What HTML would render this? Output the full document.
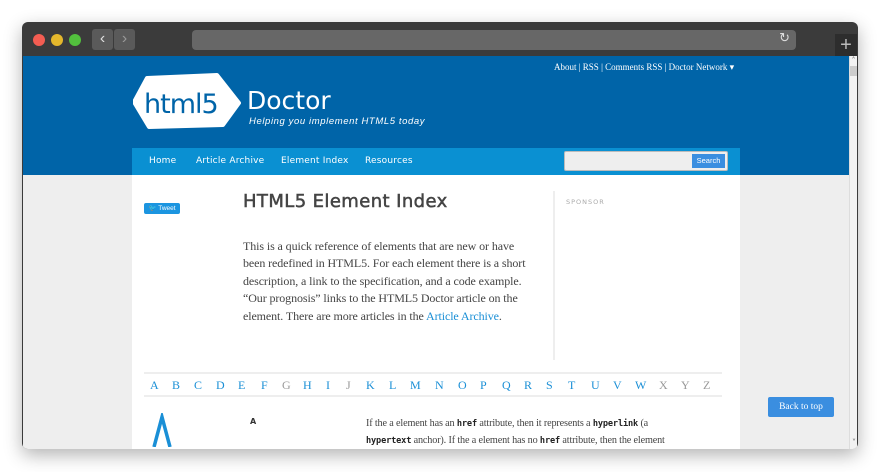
<!DOCTYPE html>
<html><head><meta charset="utf-8"><style>
*{margin:0;padding:0;box-sizing:border-box}
body{width:880px;height:472px;background:#fff;position:relative;overflow:hidden;font-family:"Liberation Serif",serif}
.win{position:absolute;left:22px;top:22px;width:836px;height:427px;border-radius:6px;background:#3b3b3b;box-shadow:0 6px 18px rgba(0,0,0,.3);overflow:hidden}
.dot{position:absolute;top:12px;width:12px;height:12px;border-radius:50%}
.nb{position:absolute;top:7px;width:21px;height:21px;background:#5a5a5a;border-radius:3px;color:#ddd;font:16px "Liberation Sans";text-align:center;line-height:20px}
.url{position:absolute;left:170px;top:8px;width:604px;height:20px;background:#676767;border-radius:4px}
.plus{position:absolute;left:813px;top:12px;width:22px;height:22px;background:#2d2d2d;color:#bbb;font:20px "Liberation Sans";text-align:center;line-height:22px}
.view{position:absolute;left:1px;top:34px;width:834px;height:393px;background:#eee;overflow:hidden}
.hdr{position:absolute;left:0;top:0;width:826px;height:119px;background:#0064a8}
.sb{position:absolute;left:826px;top:0;width:8px;height:393px;background:#f2f2f2;border-left:1px solid #ddd}
.top{position:absolute;left:531px;top:6px;color:#fff;font-size:9px}
.nav{position:absolute;left:109px;top:92px;width:608px;height:27px;background:#0a90d2}
.nav span{position:absolute;top:8px;color:#fff;font:9px "DejaVu Sans";letter-spacing:.2px}
.srch{position:absolute;left:432px;top:3px;width:164px;height:20px;background:#eee;border:1px solid #bbb;border-radius:2px}
.sbtn{position:absolute;right:2px;top:2px;width:33px;height:14px;background:#3a8ee0;color:#fff;font:7.5px "Liberation Sans";text-align:center;line-height:14px}
.main{position:absolute;left:109px;top:119px;width:608px;height:280px;background:#fff}
.letters{position:absolute;left:12px;top:197px;width:578px;height:25px;border-top:2px solid #eee;border-bottom:2px solid #eee}
.letters span{position:absolute;top:4px;font-size:12px;color:#1a8fd6}
code{font:bold 8.6px "DejaVu Sans Mono";color:#222}
</style></head><body>
<div class="win">
<div class="dot" style="left:11px;background:#f45d52"></div>
<div class="dot" style="left:29px;background:#e4b72c"></div>
<div class="dot" style="left:47px;background:#52c03d"></div>
<div class="nb" style="left:70px">‹</div><div class="nb" style="left:92px;color:#999">›</div>
<div class="url"><span style="position:absolute;right:6px;top:1px;color:#ddd;font:13px 'DejaVu Sans'">↻</span></div>
<div class="plus">+</div>
<div class="view">
<div class="hdr">
<div class="top">About | RSS | Comments RSS | Doctor Network ▾</div>
<svg style="position:absolute;left:110px;top:17px" width="110" height="60"><path d="M14 5 L84 2 L106 30 L90 52 L16 54 L1 29 Z" fill="#fff" stroke="#fff" stroke-width="4" stroke-linejoin="round"/><text x="11" y="40" font-family="DejaVu Sans" font-size="27" fill="#0064a8" letter-spacing="-1">html5</text></svg>
<div style="position:absolute;left:224px;top:30px;color:#fff;font:25px 'DejaVu Sans'">Doctor</div>
<div style="position:absolute;left:226px;top:60px;color:#fff;font:italic 9.5px 'Liberation Sans';letter-spacing:.6px">Helping you implement HTML5 today</div>
</div>
<div class="main">
<div style="position:absolute;left:12px;top:28px;width:36px;height:11px;background:#1b95e0;border-radius:2px;color:#fff;font:6.5px 'Liberation Sans';line-height:11px;text-align:center">🐦 Tweet</div>
<div style="position:absolute;left:111px;top:16px;color:#444;font:18px 'DejaVu Sans';letter-spacing:.4px;-webkit-text-stroke:.5px #444">HTML5 Element Index</div>
<div style="position:absolute;left:111px;top:63px;width:294px;color:#444;font-size:12px;line-height:17.4px;letter-spacing:-.1px">This is a quick reference of elements that are new or have been redefined in HTML5. For each element there is a short description, a link to the specification, and a code example. “Our prognosis” links to the HTML5 Doctor article on the element. There are more articles in the <span style="color:#1a8fd6">Article Archive</span>.</div>
<div style="position:absolute;left:421px;top:16px;width:2px;height:169px;background:#eee"></div>
<div style="position:absolute;left:434px;top:23px;color:#aaa;font:6.5px 'DejaVu Sans';letter-spacing:1px">SPONSOR</div>
<div class="letters">
<span style="left:6px">A</span><span style="left:28px">B</span><span style="left:50px">C</span><span style="left:72px">D</span><span style="left:94px">E</span><span style="left:117px">F</span><span style="left:138px;color:#999">G</span><span style="left:159px">H</span><span style="left:182px">I</span><span style="left:202px;color:#999">J</span><span style="left:222px">K</span><span style="left:245px">L</span><span style="left:266px">M</span><span style="left:291px">N</span><span style="left:314px">O</span><span style="left:336px">P</span><span style="left:358px">Q</span><span style="left:380px">R</span><span style="left:402px">S</span><span style="left:424px">T</span><span style="left:447px">U</span><span style="left:469px">V</span><span style="left:491px">W</span><span style="left:515px;color:#999">X</span><span style="left:537px;color:#999">Y</span><span style="left:559px;color:#999">Z</span>
</div>
<svg style="position:absolute;left:18px;top:238px" width="26" height="34"><path d="M4 34 L12 4 L20 34" fill="none" stroke="#1a8fd6" stroke-width="3.5"/></svg>
<div style="position:absolute;left:118px;top:242px;color:#333;font:bold 8px 'DejaVu Sans'">A</div>
<div style="position:absolute;left:234px;top:240px;width:324px;color:#444;font-size:10.2px;line-height:17px;letter-spacing:-.15px">If the a element has an <code>href</code> attribute, then it represents a <code>hyperlink</code> (a <code>hypertext</code> anchor). If the a element has no <code>href</code> attribute, then the element</div>
</div>
<div class="nav"><span style="left:17px">Home</span><span style="left:64px">Article Archive</span><span style="left:149px">Element Index</span><span style="left:233px">Resources</span>
<div class="srch"><div class="sbtn">Search</div></div></div>
<div style="position:absolute;left:745px;top:341px;width:66px;height:20px;background:#3a8ee0;border-radius:2px;color:#fff;font-size:9.5px;text-align:center;line-height:20px">Back to top</div>
<div class="sb"><div style="color:#666;font:8px 'DejaVu Sans';text-align:center">˄</div><div style="height:10px;background:#ccc;margin-top:1px"></div><div style="position:absolute;bottom:2px;width:8px;text-align:center;color:#666;font:8px 'DejaVu Sans'">˅</div></div>
</div>
</div>
</body></html>
